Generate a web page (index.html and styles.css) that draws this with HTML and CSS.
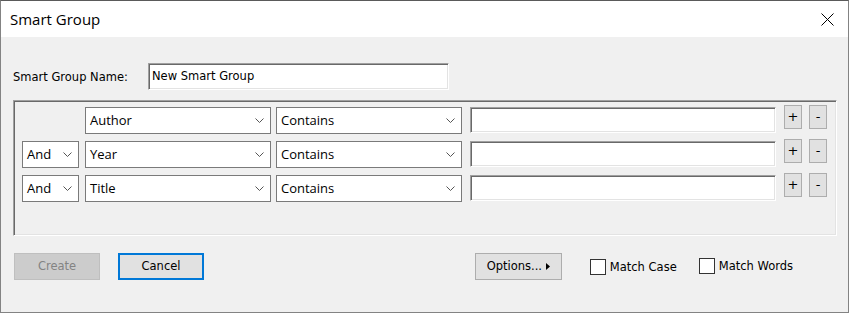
FILE: index.html
```html
<!DOCTYPE html>
<html lang="en">
<head>
    <meta charset="UTF-8">
    <title>Smart Group</title>
    <link rel="stylesheet" href="styles.css">
</head>
<body>
    <div class="window">
        <div class="titlebar">
            <span class="title">Smart Group</span>
            <svg class="close" width="13" height="13" viewBox="0 0 13 13">
                <path d="M0.5 0.5 L12.5 12.5 M12.5 0.5 L0.5 12.5" stroke="#000" stroke-width="1" fill="none"/>
            </svg>
        </div>

        <div class="content">
            <div class="name-row">
                <label class="name-label">Smart Group Name:</label>
                <input type="text" class="sunken name-input" value="New Smart Group">
            </div>

            <!-- search conditions -->
            <div class="groupbox">
                <div class="cond-row">
                    <div class="combo-spacer"></div>
                    <div class="combo field"><span>Author</span><svg width="9" height="5" viewBox="0 0 9 5"><polyline points="0.5,0.5 4.5,4.5 8.5,0.5" fill="none" stroke="#555"/></svg></div>
                    <div class="combo op"><span>Contains</span><svg width="9" height="5" viewBox="0 0 9 5"><polyline points="0.5,0.5 4.5,4.5 8.5,0.5" fill="none" stroke="#555"/></svg></div>
                    <input type="text" class="sunken value-input">
                    <button class="small-btn">+</button>
                    <button class="small-btn">-</button>
                </div>
                <div class="cond-row">
                    <div class="combo conj"><span>And</span><svg width="9" height="5" viewBox="0 0 9 5"><polyline points="0.5,0.5 4.5,4.5 8.5,0.5" fill="none" stroke="#555"/></svg></div>
                    <div class="combo field"><span>Year</span><svg width="9" height="5" viewBox="0 0 9 5"><polyline points="0.5,0.5 4.5,4.5 8.5,0.5" fill="none" stroke="#555"/></svg></div>
                    <div class="combo op"><span>Contains</span><svg width="9" height="5" viewBox="0 0 9 5"><polyline points="0.5,0.5 4.5,4.5 8.5,0.5" fill="none" stroke="#555"/></svg></div>
                    <input type="text" class="sunken value-input">
                    <button class="small-btn">+</button>
                    <button class="small-btn">-</button>
                </div>
                <div class="cond-row">
                    <div class="combo conj"><span>And</span><svg width="9" height="5" viewBox="0 0 9 5"><polyline points="0.5,0.5 4.5,4.5 8.5,0.5" fill="none" stroke="#555"/></svg></div>
                    <div class="combo field"><span>Title</span><svg width="9" height="5" viewBox="0 0 9 5"><polyline points="0.5,0.5 4.5,4.5 8.5,0.5" fill="none" stroke="#555"/></svg></div>
                    <div class="combo op"><span>Contains</span><svg width="9" height="5" viewBox="0 0 9 5"><polyline points="0.5,0.5 4.5,4.5 8.5,0.5" fill="none" stroke="#555"/></svg></div>
                    <input type="text" class="sunken value-input">
                    <button class="small-btn">+</button>
                    <button class="small-btn">-</button>
                </div>
            </div>

            <div class="footer">
                <button class="btn" disabled>Create</button>
                <button class="btn default">Cancel</button>
                <div class="footer-space"></div>
                <button class="btn options">Options...<svg width="4" height="7" viewBox="0 0 4 7"><path d="M0 0 L4 3.5 L0 7 Z" fill="#000"/></svg></button>
                <label class="check first"><span class="box"></span>Match Case</label>
                <label class="check second"><span class="box"></span>Match Words</label>
            </div>
        </div>
    </div>
</body>
</html>
```

FILE: styles.css
```css
:root {
    --face: #f0f0f0;
    --btn-face: #e1e1e1;
    --btn-border: #adadad;
    --combo-border: #7a7a7a;
    --focus: #0078d7;
}

* {
    box-sizing: border-box;
}

body {
    margin: 0;
    font-family: 'DejaVu Sans', 'Liberation Sans', sans-serif;
    font-size: 11.5px;
    color: #000;
}

.window {
    width: 849px;
    height: 313px;
    border: 1px solid #838383;
    border-top-color: #5a5a5a;
    background: var(--face);
    display: flex;
    flex-direction: column;
}

.titlebar {
    height: 36px;
    background: #fff;
    display: flex;
    align-items: center;
    justify-content: space-between;
    padding: 0 14px 0 9px;
}

.title {
    font-family: 'Open Sans', 'Noto Sans', sans-serif;
    font-size: 15px;
    margin-top: -1px;
}

.content {
    padding: 26px 0 0 12px;
    display: flex;
    flex-direction: column;
}

.name-row {
    display: flex;
    align-items: center;
}

.name-label {
    width: 135px;
}

.sunken {
    border: 1px solid;
    border-color: #a0a0a0 #fff #fff #a0a0a0;
    box-shadow: inset 1px 1px 0 #696969, inset -1px -1px 0 #e3e3e3;
    background: #fff;
    font-family: 'DejaVu Sans', sans-serif;
    font-size: 11.5px;
    outline: none;
}

.name-input {
    width: 301px;
    height: 27px;
    padding: 0 3px 2px;
}

.groupbox {
    margin-top: 10px;
    width: 824px;
    height: 136px;
    border: 1px solid;
    border-color: #a0a0a0 #fff #fff #a0a0a0;
    box-shadow: inset 1px 1px 0 #696969, inset -1px -1px 0 #e3e3e3;
    padding: 6px 0 0 8px;
    display: flex;
    flex-direction: column;
    gap: 8px;
}

.cond-row {
    display: flex;
    align-items: flex-start;
    height: 26px;
}

.combo-spacer,
.combo.conj {
    width: 57px;
    margin-right: 6px;
}

.combo {
    height: 27px;
    border: 1px solid var(--combo-border);
    background: #fff;
    display: flex;
    align-items: center;
    justify-content: space-between;
    padding: 0 6px 1px 4px;
    font-family: 'Open Sans', 'Noto Sans', sans-serif;
    font-size: 13px;
}

.combo svg {
    flex: none;
}

.combo.field {
    width: 186px;
    margin-right: 5px;
}

.combo.op {
    width: 186px;
    margin-right: 8px;
}

.value-input {
    width: 306px;
    height: 26px;
    margin-right: 8px;
}

.small-btn {
    width: 18px;
    height: 24px;
    margin: -2px 7px 0 0;
    padding: 0 0 2px;
    border: 1px solid var(--btn-border);
    background: var(--btn-face);
    font-family: 'DejaVu Sans', sans-serif;
    font-size: 13px;
    color: #000;
}

.footer {
    margin-top: 17px;
    display: flex;
    align-items: center;
    padding-right: 55px;
}

.btn {
    height: 27px;
    width: 86px;
    border: 1px solid var(--btn-border);
    background: var(--btn-face);
    font-family: 'DejaVu Sans', sans-serif;
    font-size: 11.5px;
    color: #000;
    padding: 0 0 1px;
    margin-right: 18px;
}

.btn[disabled] {
    background: #cccccc;
    border-color: #bfbfbf;
    color: #838383;
    margin-left: 1px;
}

.btn.default {
    border: 2px solid var(--focus);
}

.footer-space {
    flex: 1;
}

.btn.options {
    width: 87px;
    margin-right: 28px;
    display: flex;
    align-items: center;
    justify-content: center;
    gap: 4px;
}

.check {
    display: flex;
    align-items: center;
    gap: 4px;
}

.check.first {
    margin-right: 22px;
}

.check.second {
    margin-top: -1px;
}

.box {
    width: 16px;
    height: 16px;
    border: 1px solid #333;
    background: #fff;
}
```
